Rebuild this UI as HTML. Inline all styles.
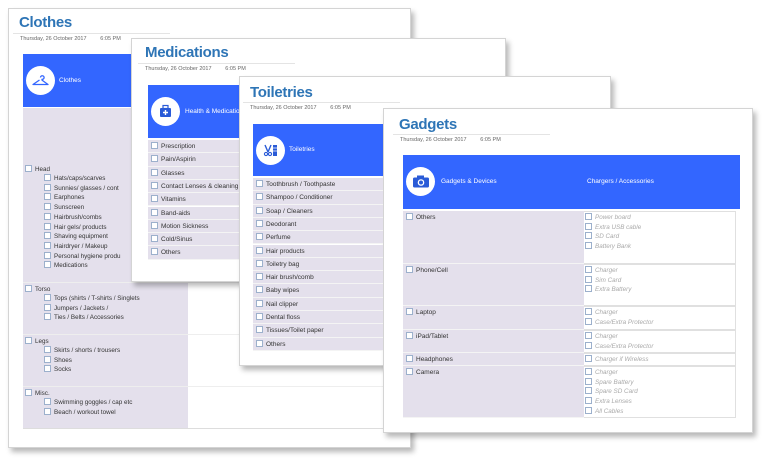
<!DOCTYPE html>
<html><head><meta charset="utf-8"><style>
*{margin:0;padding:0;box-sizing:border-box}
body{width:768px;height:464px;background:#fff;position:relative;overflow:hidden;font-family:"Liberation Sans",sans-serif}
.pg{position:absolute;background:#fff;border:1px solid #d4d4d4;box-shadow:3px 4px 5px rgba(0,0,0,.28)}
.t{position:absolute;color:#2e75b6;font-size:15px;font-weight:bold;letter-spacing:-0.3px}
.ul{position:absolute;height:1px;background:#e4e4e4}
.d{position:absolute;font-size:5.5px;color:#666;white-space:nowrap}
.hd{position:absolute;background:#3366ff;color:#fff;font-size:6.5px}
.ic{position:absolute;width:29px;height:29px;border-radius:50%;background:#fff}
.ic svg{position:absolute;left:0;top:0}
.ab{position:absolute}
.r{position:absolute;background:#e4e0ec;border-bottom:1px solid #f4f4f4;font-size:6.5px;color:#333;white-space:nowrap;overflow:hidden}
.cb{display:inline-block;width:7px;height:7px;border:1px solid #9cb0cc;background:#fff;vertical-align:-1px;margin-right:3px}
.li{position:absolute;font-size:6.3px;color:#333;white-space:nowrap}
.g{color:#aaa;font-style:italic}
</style></head><body>

<!-- Clothes -->
<div class="pg" style="left:8px;top:8px;width:403px;height:440px"></div>
<div class="t" style="left:19px;top:14px">Clothes</div>
<div class="ul" style="left:13px;top:33px;width:157px"></div>
<div class="d" style="left:20px;top:36px">Thursday, 26 October 2017&nbsp;&nbsp;&nbsp;&nbsp;&nbsp;&nbsp;&nbsp;&nbsp;&nbsp;6:05 PM</div>
<div class="hd" style="left:23px;top:54px;width:120px;height:53px"><div class="ic" style="left:3px;top:12px"><svg width="29" height="29"><path d="M14.5 11.5a1.8 1.8 0 1 1 1.5 1.8 v0.8 L22 18.5 H7 L13.5 14" fill="none" stroke="#3366ff" stroke-width="1.3" stroke-linejoin="round"/></svg></div><span style="position:absolute;left:36px;top:23px">Clothes</span></div>
<div class="ab" style="left:23px;top:108px;width:120px;height:54px;background:#e4e0ec"></div>
<div class="ab" style="left:23px;top:162px;width:165px;height:266px;background:#e4e0ec"></div>
<div class="ab" style="left:23px;top:282px;width:390px;height:1px;background:#eee"></div>
<div class="ab" style="left:23px;top:334px;width:390px;height:1px;background:#eee"></div>
<div class="ab" style="left:23px;top:386px;width:390px;height:1px;background:#eee"></div>
<div class="ab" style="left:23px;top:428px;width:390px;height:1px;background:#ddd"></div>
<div class="li" style="left:25px;top:165px"><span class="cb"></span>Head</div>
<div class="li" style="left:44px;top:174px;line-height:9.7px"><span class="cb"></span>Hats/caps/scarves<br><span class="cb"></span>Sunnies/ glasses / cont<br><span class="cb"></span>Earphones<br><span class="cb"></span>Sunscreen<br><span class="cb"></span>Hairbrush/combs<br><span class="cb"></span>Hair gels/ products<br><span class="cb"></span>Shaving equipment<br><span class="cb"></span>Hairdryer / Makeup<br><span class="cb"></span>Personal hygiene produ<br><span class="cb"></span>Medications</div>
<div class="li" style="left:25px;top:285px"><span class="cb"></span>Torso</div>
<div class="li" style="left:44px;top:294px;line-height:9.7px"><span class="cb"></span>Tops (shirts / T-shirts / Singlets<br><span class="cb"></span>Jumpers / Jackets /<br><span class="cb"></span>Ties / Belts / Accessories</div>
<div class="li" style="left:25px;top:337px"><span class="cb"></span>Legs</div>
<div class="li" style="left:44px;top:346px;line-height:9.7px"><span class="cb"></span>Skirts / shorts / trousers<br><span class="cb"></span>Shoes<br><span class="cb"></span>Socks</div>
<div class="li" style="left:25px;top:389px"><span class="cb"></span>Misc.</div>
<div class="li" style="left:44px;top:398px;line-height:9.7px"><span class="cb"></span>Swimming goggles / cap etc<br><span class="cb"></span>Beach / workout towel</div>

<!-- Medications -->
<div class="pg" style="left:131px;top:38px;width:375px;height:244px"></div>
<div class="t" style="left:145px;top:44px">Medications</div>
<div class="ul" style="left:138px;top:63px;width:157px"></div>
<div class="d" style="left:145px;top:66px">Thursday, 26 October 2017&nbsp;&nbsp;&nbsp;&nbsp;&nbsp;&nbsp;&nbsp;&nbsp;&nbsp;6:05 PM</div>
<div class="hd" style="left:148px;top:85px;width:100px;height:53px"><div class="ic" style="left:3px;top:12px"><svg width="29" height="29"><rect x="12" y="8.5" width="5" height="3" fill="none" stroke="#2a5bd7" stroke-width="1.2"/><rect x="9" y="11" width="11" height="9" rx="1" fill="#2a5bd7"/><path d="M14.5 13v5M12 15.5h5" stroke="#fff" stroke-width="1.4"/></svg></div><span style="position:absolute;left:37px;top:23px">Health &amp; Medications</span></div>
<div id="med"></div>

<!-- Toiletries -->
<div class="pg" style="left:239px;top:76px;width:372px;height:290px"></div>
<div class="t" style="left:250px;top:84px">Toiletries</div>
<div class="ul" style="left:243px;top:102px;width:157px"></div>
<div class="d" style="left:250px;top:105px">Thursday, 26 October 2017&nbsp;&nbsp;&nbsp;&nbsp;&nbsp;&nbsp;&nbsp;&nbsp;&nbsp;6:05 PM</div>
<div class="hd" style="left:253px;top:124px;width:140px;height:52px"><div class="ic" style="left:3px;top:12px"><svg width="29" height="29"><path d="M9 9l3 7M15 9l-3 7" stroke="#2a5bd7" stroke-width="1.4"/><circle cx="10" cy="18" r="1.6" fill="none" stroke="#2a5bd7" stroke-width="1.1"/><circle cx="14" cy="18" r="1.6" fill="none" stroke="#2a5bd7" stroke-width="1.1"/><rect x="17" y="9" width="4" height="11" fill="#2a5bd7"/><path d="M17 12h4M17 15h4" stroke="#fff" stroke-width="0.8"/></svg></div><span style="position:absolute;left:36px;top:22px">Toiletries</span></div>

<!-- Gadgets -->
<div class="pg" style="left:383px;top:108px;width:370px;height:325px"></div>
<div class="t" style="left:399px;top:116px">Gadgets</div>
<div class="ul" style="left:393px;top:134px;width:157px"></div>
<div class="d" style="left:400px;top:137px">Thursday, 26 October 2017&nbsp;&nbsp;&nbsp;&nbsp;&nbsp;&nbsp;&nbsp;&nbsp;&nbsp;6:05 PM</div>
<div class="hd" style="left:403px;top:155px;width:337px;height:54px"><div class="ic" style="left:3px;top:12px"><svg width="29" height="29"><rect x="7" y="10.5" width="16" height="10" rx="1.5" fill="#2a5bd7"/><rect x="11" y="8.5" width="7" height="3" fill="#2a5bd7"/><circle cx="15" cy="15.5" r="3.3" fill="#fff"/><circle cx="15" cy="15.5" r="2" fill="#2a5bd7"/></svg></div><span style="position:absolute;left:38px;top:23px">Gadgets &amp; Devices</span><span style="position:absolute;left:184px;top:23px">Chargers / Accessories</span></div>

<script>
function rows(x,y,w,items){var h='';items.forEach(function(s,i){h+='<div class="r" style="left:'+x+'px;top:'+(y+i*13.3)+'px;width:'+w+'px;height:13.3px;padding:2px 3px"><span class="cb"></span>'+s+'</div>'});return h;}
var b=document.body;
var m=document.createElement('div');
m.innerHTML=rows(148,140,92,['Prescription','Pain/Aspirin','Glasses','Contact Lenses &amp; cleaning','Vitamins','Band-aids','Motion Sickness','Cold/Sinus','Others']);
document.getElementById('med').appendChild(m);
var t=document.createElement('div');
t.innerHTML=rows(253,178,130,['Toothbrush / Toothpaste','Shampoo / Conditioner','Soap / Cleaners','Deodorant','Perfume','Hair products','Toiletry bag','Hair brush/comb','Baby wipes','Nail clipper','Dental floss','Tissues/Toilet paper','Others']);
b.appendChild(t);
var G=[['Others',211,264,['Power board','Extra USB cable','SD Card','Battery Bank']],['Phone/Cell',264,306,['Charger','Sim Card','Extra Battery']],['Laptop',306,330,['Charger','Case/Extra Protector']],['iPad/Tablet',330,353,['Charger','Case/Extra Protector']],['Headphones',353,366,['Charger if Wireless']],['Camera',366,418,['Charger','Spare Battery','Spare SD Card','Extra Lenses','All Cables']]];
var h='';
G.forEach(function(g){h+='<div class="r" style="left:403px;top:'+g[1]+'px;width:181px;height:'+(g[2]-g[1])+'px;padding:2px 3px;border-bottom:1px solid #f4f4f4"><span class="cb"></span>'+g[0]+'</div>';
h+='<div class="ab" style="left:584px;top:'+g[1]+'px;width:152px;height:'+(g[2]-g[1])+'px;border:1px solid #e0e0e0;border-left:none"></div>';
h+='<div class="li g" style="left:585px;top:'+(g[1]+2)+'px;line-height:9.7px">'+g[3].map(function(s){return '<span class="cb"></span>'+s}).join('<br>')+'</div>';});
var gd=document.createElement('div');gd.innerHTML=h;b.appendChild(gd);
</script>
</body></html>
